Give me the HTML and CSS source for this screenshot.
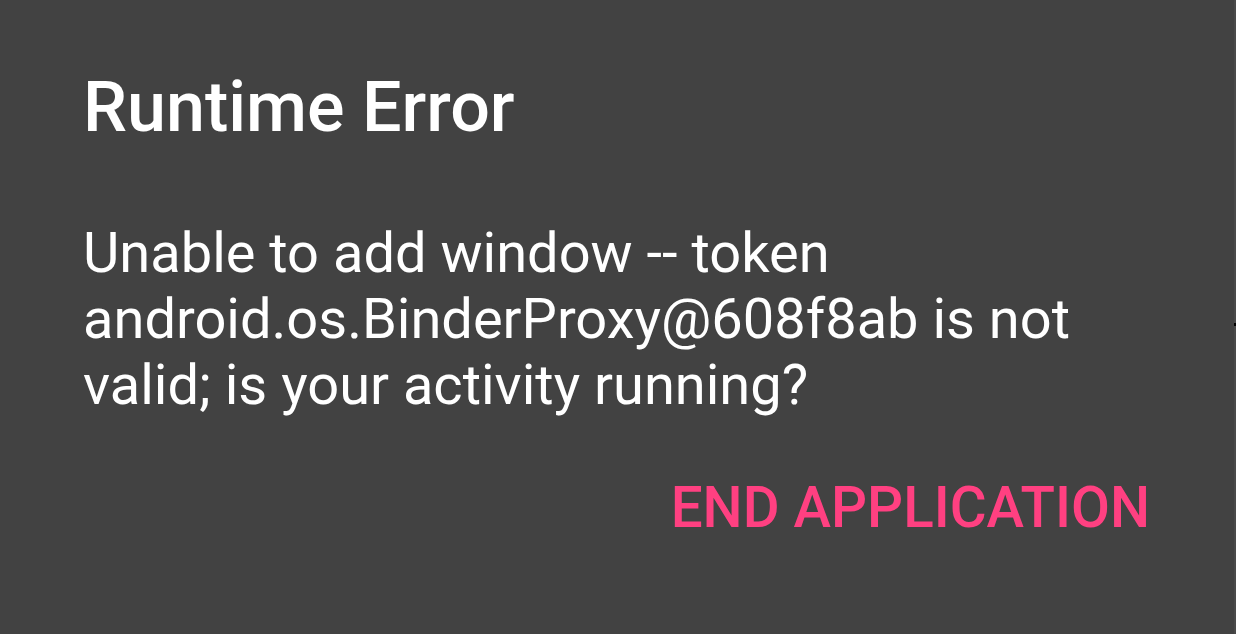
FILE: index.html
```html
<!DOCTYPE html>
<html>
<head>
<meta charset="utf-8">
<link rel="stylesheet" href="styles.css">
</head>
<body>
<div class="dialog">
  <h1 class="title">Runtime Error</h1>
  <p class="message">Unable to add window -- token android.os.BinderProxy@608f8ab is not valid; is your activity running?</p>
  <div class="actions">
    <button class="btn">END APPLICATION</button>
  </div>
  <div class="edge"><span class="tick"></span></div>
</div>
</body>
</html>
```
FILE: styles.css
```css
html, body {
  margin: 0;
  padding: 0;
  width: 1236px;
  height: 634px;
  overflow: hidden;
  background: #424242;
}
.dialog {
  position: relative;
  width: 1236px;
  height: 634px;
  box-sizing: border-box;
  padding: 66px 86px 0 83px;
  font-family: Roboto, "Liberation Sans", sans-serif;
  color: #ffffff;
}
.title {
  margin: 0;
  font-size: 70px;
  font-weight: 500;
  line-height: 82px;
}
.message {
  margin: 72px 0 0 0;
  font-size: 56px;
  font-weight: 400;
  line-height: 66px;
  max-width: 1010px;
}
.actions {
  display: flex;
  justify-content: flex-end;
  margin-top: 58px;
}
.btn {
  background: none;
  border: 0;
  padding: 0;
  font-family: Roboto, "Liberation Sans", sans-serif;
  font-size: 56.5px;
  font-weight: 500;
  color: #ff4081;
  line-height: 64px;
}
.edge {
  position: absolute;
  right: 0;
  top: 0;
  width: 2px;
  height: 634px;
  background: #4a4a4a;
}
.tick {
  position: absolute;
  top: 323px;
  left: 0;
  width: 2px;
  height: 3px;
  background: #000;
}
```
